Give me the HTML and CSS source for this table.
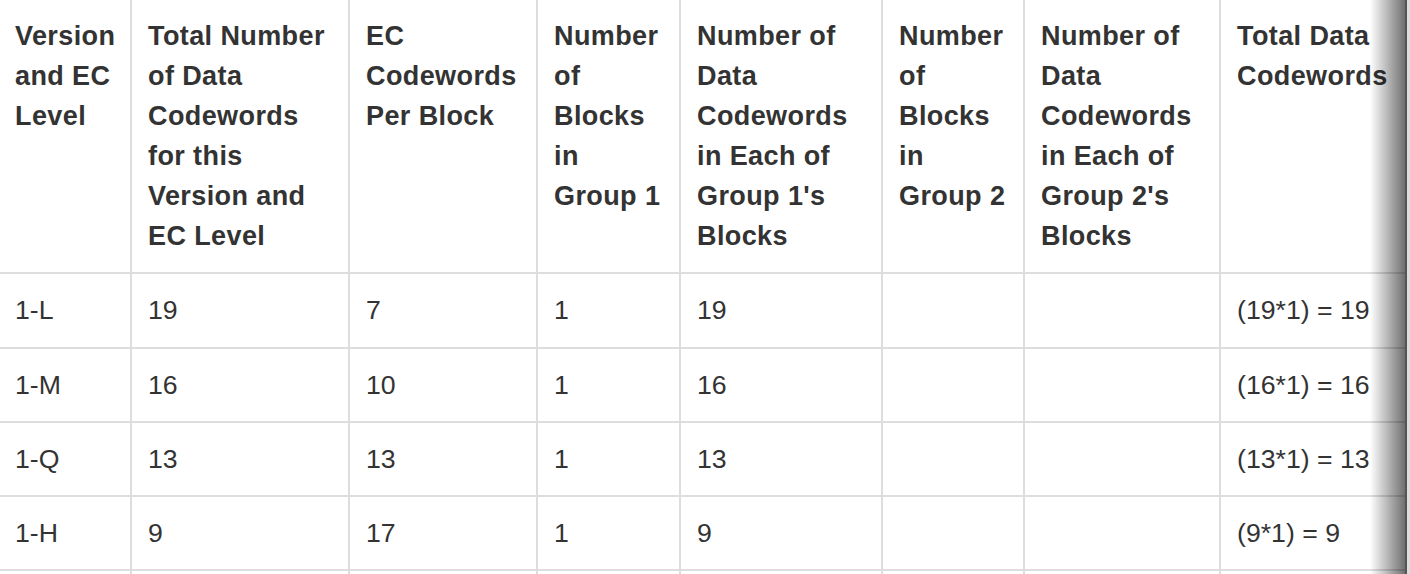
FILE: index.html
```html
<!DOCTYPE html>
<html>
<head>
<meta charset="utf-8">
<link rel="stylesheet" href="styles.css">
</head>
<body>
<div class="wrap">
  <table class="qr">
    <colgroup>
      <col class="c1"><col class="c2"><col class="c3"><col class="c4"><col class="c5"><col class="c6"><col class="c7"><col class="c8">
    </colgroup>
    <thead>
      <tr>
        <th>Version and EC Level</th>
        <th>Total Number of Data Codewords for this Version and EC Level</th>
        <th>EC Codewords Per Block</th>
        <th>Number of Blocks in Group 1</th>
        <th>Number of Data Codewords in Each of Group 1's Blocks</th>
        <th>Number of Blocks in Group 2</th>
        <th>Number of Data Codewords in Each of Group 2's Blocks</th>
        <th>Total Data Codewords</th>
      </tr>
    </thead>
    <tbody>
      <tr><td>1-L</td><td>19</td><td>7</td><td>1</td><td>19</td><td></td><td></td><td>(19*1) = 19</td></tr>
      <tr><td>1-M</td><td>16</td><td>10</td><td>1</td><td>16</td><td></td><td></td><td>(16*1) = 16</td></tr>
      <tr><td>1-Q</td><td>13</td><td>13</td><td>1</td><td>13</td><td></td><td></td><td>(13*1) = 13</td></tr>
      <tr><td>1-H</td><td>9</td><td>17</td><td>1</td><td>9</td><td></td><td></td><td>(9*1) = 9</td></tr>
      <tr class="empty"><td></td><td></td><td></td><td></td><td></td><td></td><td></td><td></td></tr>
    </tbody>
  </table>
  <div class="shade"></div>
</div>
</body>
</html>
```
FILE: styles.css
```css
html, body {
  margin: 0;
  padding: 0;
  background: #fff;
}
.wrap {
  position: relative;
  width: 1410px;
  height: 574px;
  overflow: hidden;
}
.qr {
  border-collapse: separate;
  border-spacing: 0;
  table-layout: fixed;
  width: 1421px;
  font-family: "Liberation Sans", Arial, Helvetica, sans-serif;
  font-size: 26.67px;
  line-height: 40px;
  color: #333;
}
.c1 { width: 132px; }
.c2 { width: 218px; }
.c3 { width: 188px; }
.c4 { width: 143px; }
.c5 { width: 202px; }
.c6 { width: 142px; }
.c7 { width: 196px; }
.c8 { width: 200px; }
.qr th, .qr td {
  box-sizing: border-box;
  text-align: left;
  padding: 16px 12px 16px 16px;
  border-right: 2px solid #ddd;
  border-bottom: 2px solid #ddd;
}
.qr th {
  vertical-align: top;
  font-weight: bold;
  font-size: 27px;
  letter-spacing: 0.4px;
}
.qr td {
  vertical-align: middle;
  font-weight: normal;
  padding-top: 16px;
  padding-bottom: 17px;
}
.qr tbody tr + tr td {
  padding-bottom: 16px;
}
.qr .empty td {
  height: 74px;
}
.qr th:first-child, .qr td:first-child {
  padding-left: 15px;
}
.shade {
  position: absolute;
  top: 0;
  right: 0;
  width: 40px;
  height: 100%;
  background:
    linear-gradient(to right, #555, #555) 35px 0 / 2px 100% no-repeat,
    linear-gradient(to right, #ddd, #ddd) 37px 0 / 3px 100% no-repeat,
    linear-gradient(to right, rgba(0,0,0,0), rgba(0,0,0,0.56)) 0 0 / 35px 100% no-repeat;
}
```
